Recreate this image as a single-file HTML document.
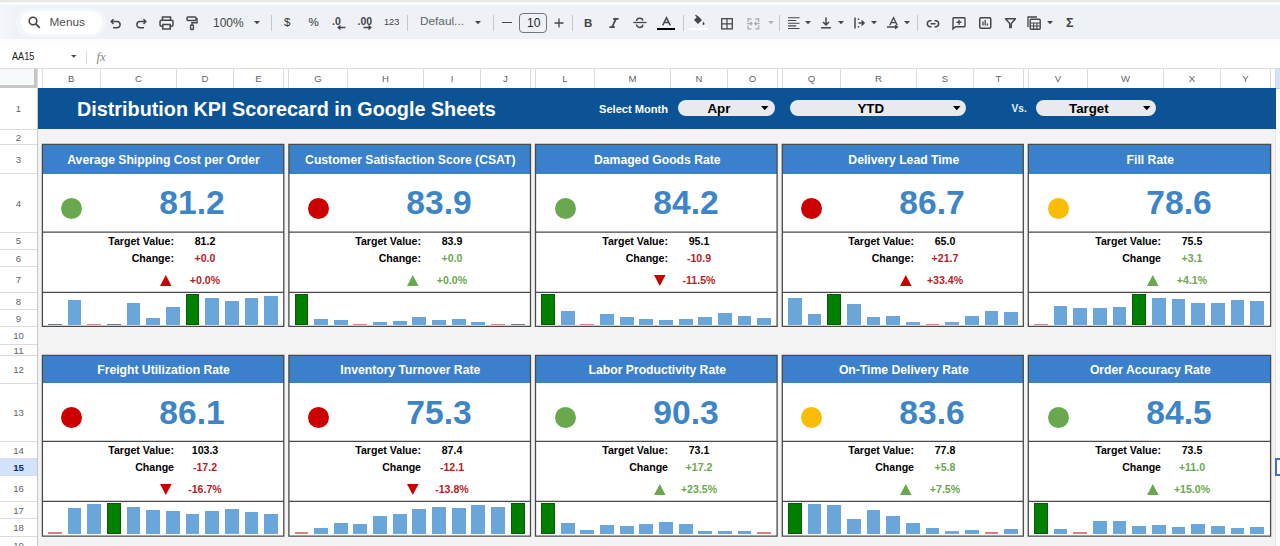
<!DOCTYPE html><html><head><meta charset="utf-8"><title>Distribution KPI Scorecard</title><style>
*{margin:0;padding:0;box-sizing:border-box}
html,body{width:1280px;height:546px;overflow:hidden;background:#fff;font-family:"Liberation Sans",sans-serif;position:relative}
.a{position:absolute}
.t{position:absolute;white-space:nowrap;line-height:1}
.ic{position:absolute;overflow:visible}
.ch{color:#5f6368;font-size:9.6px;text-align:center}
.rh{color:#5f6368;font-size:9.6px;text-align:center}
.ct{color:#fff;font-weight:bold;font-size:12.2px;text-align:center}
.big{color:#3d85c6;font-weight:bold;font-size:33.6px;text-align:center}
.lb{color:#000;font-weight:bold;font-size:10.6px;text-align:right}
.vl{font-weight:bold;font-size:10.6px;text-align:center}
.bar{position:absolute;background:#6ba6da}
</style></head><body>
<div class="a" style="left:0;top:0;width:1280px;height:1.5px;background:#e9e6e8"></div>
<div class="a" style="left:0;top:1.5px;width:1280px;height:43.5px;background:#fbfcfe"></div>
<div class="a" style="left:0;top:4.5px;width:1280px;height:34px;background:linear-gradient(90deg,#f4f6fa 0px,#eef2f7 14px)"></div>
<div class="a" style="left:16px;top:8px;width:90px;height:29px;background:#f3f6fa;border-radius:15px"></div>
<div class="a" style="left:21px;top:11px;width:80.5px;height:23px;background:#fff;border-radius:12px"></div>
<svg class="ic" style="left:28px;top:16px" width="13" height="13" viewBox="0 0 13 13"><circle cx="5" cy="5" r="3.8" fill="none" stroke="#444" stroke-width="1.6"/><path d="M7.8 7.8 L11.8 11.8" stroke="#444" stroke-width="1.7"/></svg>
<div class="t" style="left:49.5px;top:17.2px;font-size:11.8px;color:#505050">Menus</div>
<svg class="ic" style="left:110px;top:18px" width="12" height="11" viewBox="0 0 12 11"><path d="M3.5 1.2 L1.2 3.6 L3.5 6" fill="none" stroke="#444746" stroke-width="1.5"/><path d="M1.5 3.6 H7 A3.1 3.1 0 0 1 7 9.8 H3" fill="none" stroke="#444746" stroke-width="1.5"/></svg>
<svg class="ic" style="left:135px;top:18px" width="12" height="11" viewBox="0 0 12 11"><path d="M8.5 1.2 L10.8 3.6 L8.5 6" fill="none" stroke="#444746" stroke-width="1.5"/><path d="M10.5 3.6 H5 A3.1 3.1 0 0 0 5 9.8 H9" fill="none" stroke="#444746" stroke-width="1.5"/></svg>
<svg class="ic" style="left:159px;top:16px" width="15" height="14" viewBox="0 0 15 14"><path d="M3.5 4 V1 H11.5 V4" fill="none" stroke="#444746" stroke-width="1.5"/><rect x="1" y="4.3" width="13" height="6" rx="1.5" fill="none" stroke="#444746" stroke-width="1.5"/><rect x="3.8" y="8.5" width="7.4" height="4.5" fill="#eef2f7" stroke="#444746" stroke-width="1.5"/></svg>
<svg class="ic" style="left:186px;top:16px" width="12" height="14" viewBox="0 0 12 14"><rect x="1" y="1" width="9" height="3.6" rx="1" fill="none" stroke="#444746" stroke-width="1.5"/><path d="M10 2.8 H11 V6.8 H6 V9" fill="none" stroke="#444746" stroke-width="1.4"/><rect x="4.6" y="9" width="2.8" height="4.5" rx="0.8" fill="none" stroke="#444746" stroke-width="1.4"/></svg>
<div class="t" style="left:213px;top:17px;font-size:12px;color:#444">100%</div>
<svg class="ic" style="left:254px;top:21.4px" width="6" height="3.2" viewBox="0 0 6 3.2"><path d="M0 0 H6 L3.0 3.2 Z" fill="#444746"/></svg>
<div class="a" style="left:271px;top:14.5px;width:1px;height:16.5px;background:#c7c7c7"></div>
<div class="t" style="left:284px;top:16.5px;font-size:11.5px;color:#333">$</div>
<div class="t" style="left:308.5px;top:17px;font-size:11.5px;color:#333">%</div>
<div class="t" style="left:332px;top:16px;font-size:10.5px;color:#444;font-weight:bold">.0</div>
<svg class="ic" style="left:337px;top:24.5px" width="9" height="5" viewBox="0 0 9 5"><path d="M8.5 2.5 H1.5 M3.5 0.5 L1.2 2.5 L3.5 4.5" fill="none" stroke="#444746" stroke-width="1.4"/></svg>
<div class="t" style="left:357.5px;top:16px;font-size:10.5px;color:#444;font-weight:bold">.00</div>
<svg class="ic" style="left:363px;top:24.5px" width="9" height="5" viewBox="0 0 9 5"><path d="M0.5 2.5 H7.5 M5.5 0.5 L7.8 2.5 L5.5 4.5" fill="none" stroke="#444746" stroke-width="1.4"/></svg>
<div class="t" style="left:384px;top:17.8px;font-size:9.2px;color:#444">123</div>
<div class="a" style="left:407px;top:14.5px;width:1px;height:16.5px;background:#c7c7c7"></div>
<div class="t" style="left:420px;top:15.8px;font-size:11.8px;color:#5f6368">Defaul...</div>
<svg class="ic" style="left:475px;top:21.4px" width="6" height="3.2" viewBox="0 0 6 3.2"><path d="M0 0 H6 L3.0 3.2 Z" fill="#444746"/></svg>
<div class="a" style="left:493px;top:14.5px;width:1px;height:16.5px;background:#c7c7c7"></div>
<div class="a" style="left:502px;top:21.6px;width:9.5px;height:1.5px;background:#444746"></div>
<div class="a" style="left:519px;top:13px;width:28px;height:20px;border:1px solid #747775;border-radius:4px"></div>
<div class="t" style="left:527px;top:17px;font-size:12px;color:#1f1f1f">10</div>
<svg class="ic" style="left:554px;top:17.5px" width="10" height="10" viewBox="0 0 10 10"><path d="M0.5 5 H9.5 M5 0.5 V9.5" stroke="#444746" stroke-width="1.3"/></svg>
<div class="a" style="left:572px;top:14.5px;width:1px;height:16.5px;background:#c7c7c7"></div>
<div class="t" style="left:584px;top:17.7px;font-size:11.5px;color:#444;font-weight:bold">B</div>
<svg class="ic" style="left:608.5px;top:17.5px" width="10" height="10" viewBox="0 0 10 10"><path d="M4.2 0.9 H9.6 M0.4 9.1 H5.8 M6.9 0.9 L3.1 9.1" fill="none" stroke="#444746" stroke-width="1.7"/></svg>
<svg class="ic" style="left:632.5px;top:17px" width="14" height="11" viewBox="0 0 14 11"><path d="M3.6 4 A3.1 2.6 0 0 1 9.8 3.6 M3.6 7.4 A3.1 2.9 0 0 0 9.8 7.6" fill="none" stroke="#444746" stroke-width="1.5"/><path d="M0.3 5.5 H13.5" stroke="#444746" stroke-width="1.3"/></svg>
<svg class="ic" style="left:662px;top:17px" width="9" height="8.5" viewBox="0 0 9 8.5"><path d="M0.7 8.3 L4.5 0.6 L8.3 8.3 M2 5.6 H7" fill="none" stroke="#444746" stroke-width="1.5"/></svg>
<div class="a" style="left:657px;top:27.5px;width:18px;height:2.8px;background:#000"></div>
<div class="a" style="left:683px;top:14.5px;width:1px;height:16.5px;background:#c7c7c7"></div>
<svg class="ic" style="left:692px;top:14px" width="14" height="12" viewBox="0 0 14 12"><path d="M2 6 L6 2 L10 6 L6 10 Z" fill="#444746"/><path d="M3.5 1 L6 3.5" stroke="#444746" stroke-width="1.4"/><path d="M11.5 7.5 Q12.5 9 12.5 10 A1 1 0 0 1 10.5 10 Q10.5 9 11.5 7.5Z" fill="#444746"/></svg>
<div class="a" style="left:689px;top:27.5px;width:19px;height:2.8px;background:#fff"></div>
<svg class="ic" style="left:720.5px;top:17.5px" width="12" height="11.5" viewBox="0 0 12 11.5"><rect x="0.7" y="0.7" width="10.6" height="10.2" fill="none" stroke="#444746" stroke-width="1.3"/><path d="M6 0.7 V10.9 M0.7 5.8 H11.3" stroke="#444746" stroke-width="1.2"/></svg>
<svg class="ic" style="left:747px;top:17.5px" width="13" height="11.5" viewBox="0 0 13 11.5"><path d="M4.5 1 H1 V4 M1 7.5 V10.8 H4.5 M8.2 1 H11.7 V4 M11.7 7.5 V10.8 H8.2 M0 5.6 H5 M3.4 4 L5 5.6 L3.4 7.2 M12.7 5.6 H7.7 M9.3 4 L7.7 5.6 L9.3 7.2" fill="none" stroke="#a9acb0" stroke-width="1.3"/></svg>
<svg class="ic" style="left:768px;top:21.4px" width="6" height="3.2" viewBox="0 0 6 3.2"><path d="M0 0 H6 L3.0 3.2 Z" fill="#b0b3b8"/></svg>
<div class="a" style="left:779px;top:14.5px;width:1px;height:16.5px;background:#c7c7c7"></div>
<svg class="ic" style="left:787.5px;top:17px" width="12" height="12" viewBox="0 0 12 12"><path d="M0 0.8 H11.5 M0 3.5 H8.2 M0 6.2 H11.5 M0 8.9 H8.2 M0 11.5 H11.5" stroke="#444746" stroke-width="1.1"/></svg>
<svg class="ic" style="left:805px;top:21.4px" width="6" height="3.2" viewBox="0 0 6 3.2"><path d="M0 0 H6 L3.0 3.2 Z" fill="#444746"/></svg>
<svg class="ic" style="left:821px;top:17px" width="10" height="12" viewBox="0 0 10 12"><path d="M5 0.5 V7.5 M2 5 L5 8 L8 5" fill="none" stroke="#444746" stroke-width="1.5"/><path d="M0 10.8 H10" stroke="#444746" stroke-width="1.5"/></svg>
<svg class="ic" style="left:838px;top:21.4px" width="6" height="3.2" viewBox="0 0 6 3.2"><path d="M0 0 H6 L3.0 3.2 Z" fill="#444746"/></svg>
<svg class="ic" style="left:853.5px;top:17px" width="11" height="12" viewBox="0 0 11 12"><path d="M1 0.5 V11.5" stroke="#444746" stroke-width="1.5"/><path d="M4.5 6 H10 M7.5 3.5 L10 6 L7.5 8.5" fill="none" stroke="#444746" stroke-width="1.5"/><path d="M4.5 1.5 V3 M4.5 9 V10.5" stroke="#444746" stroke-width="1.5"/></svg>
<svg class="ic" style="left:871px;top:21.4px" width="6" height="3.2" viewBox="0 0 6 3.2"><path d="M0 0 H6 L3.0 3.2 Z" fill="#444746"/></svg>
<svg class="ic" style="left:888.5px;top:17px" width="9" height="8.5" viewBox="0 0 9 8.5"><path d="M0.7 8.3 L4.5 0.6 L8.3 8.3 M2 5.6 H7" fill="none" stroke="#444746" stroke-width="1.3"/></svg>
<svg class="ic" style="left:887px;top:25px" width="12" height="4" viewBox="0 0 12 4"><path d="M0 2 H10 M8 0.2 L10.5 2 L8 3.8" fill="none" stroke="#444746" stroke-width="1.3"/></svg>
<svg class="ic" style="left:904px;top:21.4px" width="6" height="3.2" viewBox="0 0 6 3.2"><path d="M0 0 H6 L3.0 3.2 Z" fill="#444746"/></svg>
<div class="a" style="left:917px;top:14.5px;width:1px;height:16.5px;background:#c7c7c7"></div>
<svg class="ic" style="left:926px;top:19.5px" width="14" height="7.5" viewBox="0 0 14 7.5"><path d="M5.5 0.8 H3.8 A3 3 0 0 0 3.8 6.7 H5.5 M8.5 0.8 H10.2 A3 3 0 0 1 10.2 6.7 H8.5 M4.5 3.75 H9.5" fill="none" stroke="#444746" stroke-width="1.5"/></svg>
<svg class="ic" style="left:951.5px;top:16.5px" width="14" height="13" viewBox="0 0 14 13"><path d="M1 12 V1.5 A0.8 0.8 0 0 1 1.8 0.8 H12.2 A0.8 0.8 0 0 1 13 1.5 V9 A0.8 0.8 0 0 1 12.2 9.8 H3.5 Z" fill="none" stroke="#444746" stroke-width="1.4"/><path d="M7 2.8 V7.8 M4.5 5.3 H9.5" stroke="#444746" stroke-width="1.4"/></svg>
<svg class="ic" style="left:978.5px;top:17px" width="12.5" height="12" viewBox="0 0 12.5 12"><rect x="0.75" y="0.75" width="11" height="10.5" rx="1.2" fill="none" stroke="#444746" stroke-width="1.5"/><path d="M4 4.5 V8.5 M6.2 3 V8.5 M8.4 6.5 V8.5" stroke="#444746" stroke-width="1.3"/></svg>
<svg class="ic" style="left:1005px;top:18px" width="11" height="10" viewBox="0 0 11 10"><path d="M0.5 0.8 H10.5 L6.3 5.5 V9.5 H4.7 V5.5 Z" fill="none" stroke="#444746" stroke-width="1.4" stroke-linejoin="round"/></svg>
<svg class="ic" style="left:1027px;top:16px" width="14" height="14" viewBox="0 0 14 14"><path d="M1 11 V1 H10" fill="none" stroke="#444746" stroke-width="1.3"/><rect x="3.2" y="3.2" width="10" height="10" rx="1" fill="none" stroke="#444746" stroke-width="1.4"/><path d="M3.2 7 H13.2 M3.2 10 H13.2 M6.6 7 V13.2 M9.9 7 V13.2" stroke="#444746" stroke-width="1.1"/></svg>
<svg class="ic" style="left:1047px;top:21.4px" width="6" height="3.2" viewBox="0 0 6 3.2"><path d="M0 0 H6 L3.0 3.2 Z" fill="#444746"/></svg>
<div class="t" style="left:1066px;top:16.5px;font-size:12.5px;color:#444;font-weight:bold">&Sigma;</div>
<div class="t" style="left:12px;top:51.6px;font-size:10.4px;color:#1a1a1a;transform:scaleX(0.88);transform-origin:0 0">AA15</div>
<svg class="ic" style="left:70.5px;top:55.4px" width="5.5" height="2.8" viewBox="0 0 5.5 2.8"><path d="M0 0 H5.5 L2.75 2.8 Z" fill="#444746"/></svg>
<div class="a" style="left:86px;top:51px;width:1px;height:13px;background:#dadce0"></div>
<div class="t" style="left:96.5px;top:50px;font-size:13px;color:#8a8a8a;font-style:italic;font-family:'Liberation Serif',serif">fx</div>
<div class="a" style="left:0;top:68px;width:1280px;height:1px;background:#dadce0"></div>
<div class="a" style="left:0;top:69px;width:1280px;height:19px;background:#fff"></div>
<div class="a" style="left:0;top:69px;width:37px;height:19px;background:#f8f9fa"></div>
<div class="a" style="left:34.3px;top:69px;width:2.8px;height:19px;background:#c4c7c5"></div>
<div class="a" style="left:0;top:85.3px;width:37.3px;height:2.7px;background:#c4c7c5"></div>
<div class="a" style="left:1275.5px;top:69px;width:10px;height:19px;background:#d3e3fd"></div>
<div class="a" style="left:41.5px;top:69px;width:1px;height:19px;background:#dadce0"></div>
<div class="t ch" style="left:42px;top:74.3px;width:58.5px">B</div>
<div class="a" style="left:100.0px;top:69px;width:1px;height:19px;background:#dadce0"></div>
<div class="t ch" style="left:100.5px;top:74.3px;width:76.0px">C</div>
<div class="a" style="left:176.0px;top:69px;width:1px;height:19px;background:#dadce0"></div>
<div class="t ch" style="left:176.5px;top:74.3px;width:57.0px">D</div>
<div class="a" style="left:233.0px;top:69px;width:1px;height:19px;background:#dadce0"></div>
<div class="t ch" style="left:233.5px;top:74.3px;width:50.0px">E</div>
<div class="a" style="left:283.0px;top:69px;width:1px;height:19px;background:#dadce0"></div>
<div class="a" style="left:288.0px;top:69px;width:1px;height:19px;background:#dadce0"></div>
<div class="t ch" style="left:288.5px;top:74.3px;width:59.0px">G</div>
<div class="a" style="left:347.0px;top:69px;width:1px;height:19px;background:#dadce0"></div>
<div class="t ch" style="left:347.5px;top:74.3px;width:76.0px">H</div>
<div class="a" style="left:423.0px;top:69px;width:1px;height:19px;background:#dadce0"></div>
<div class="t ch" style="left:423.5px;top:74.3px;width:57.0px">I</div>
<div class="a" style="left:480.0px;top:69px;width:1px;height:19px;background:#dadce0"></div>
<div class="t ch" style="left:480.5px;top:74.3px;width:50.0px">J</div>
<div class="a" style="left:530.0px;top:69px;width:1px;height:19px;background:#dadce0"></div>
<div class="a" style="left:535.0px;top:69px;width:1px;height:19px;background:#dadce0"></div>
<div class="t ch" style="left:535.5px;top:74.3px;width:59.0px">L</div>
<div class="a" style="left:594.0px;top:69px;width:1px;height:19px;background:#dadce0"></div>
<div class="t ch" style="left:594.5px;top:74.3px;width:76.0px">M</div>
<div class="a" style="left:670.0px;top:69px;width:1px;height:19px;background:#dadce0"></div>
<div class="t ch" style="left:670.5px;top:74.3px;width:57.0px">N</div>
<div class="a" style="left:727.0px;top:69px;width:1px;height:19px;background:#dadce0"></div>
<div class="t ch" style="left:727.5px;top:74.3px;width:50.0px">O</div>
<div class="a" style="left:777.0px;top:69px;width:1px;height:19px;background:#dadce0"></div>
<div class="a" style="left:782.0px;top:69px;width:1px;height:19px;background:#dadce0"></div>
<div class="t ch" style="left:782.5px;top:74.3px;width:58.0px">Q</div>
<div class="a" style="left:840.0px;top:69px;width:1px;height:19px;background:#dadce0"></div>
<div class="t ch" style="left:840.5px;top:74.3px;width:76.0px">R</div>
<div class="a" style="left:916.0px;top:69px;width:1px;height:19px;background:#dadce0"></div>
<div class="t ch" style="left:916.5px;top:74.3px;width:57.0px">S</div>
<div class="a" style="left:973.0px;top:69px;width:1px;height:19px;background:#dadce0"></div>
<div class="t ch" style="left:973.5px;top:74.3px;width:50.0px">T</div>
<div class="a" style="left:1023.0px;top:69px;width:1px;height:19px;background:#dadce0"></div>
<div class="a" style="left:1028.0px;top:69px;width:1px;height:19px;background:#dadce0"></div>
<div class="t ch" style="left:1028.5px;top:74.3px;width:59.0px">V</div>
<div class="a" style="left:1087.0px;top:69px;width:1px;height:19px;background:#dadce0"></div>
<div class="t ch" style="left:1087.5px;top:74.3px;width:76.0px">W</div>
<div class="a" style="left:1163.0px;top:69px;width:1px;height:19px;background:#dadce0"></div>
<div class="t ch" style="left:1163.5px;top:74.3px;width:57.0px">X</div>
<div class="a" style="left:1220.0px;top:69px;width:1px;height:19px;background:#dadce0"></div>
<div class="t ch" style="left:1220.5px;top:74.3px;width:50.0px">Y</div>
<div class="a" style="left:1270.0px;top:69px;width:1px;height:19px;background:#dadce0"></div>
<div class="a" style="left:1275.0px;top:69px;width:1px;height:19px;background:#dadce0"></div>
<div class="t ch" style="left:1275.5px;top:74.3px;width:124.5px">AA</div>
<div class="a" style="left:37px;top:69px;width:1px;height:19px;background:#dadce0"></div>
<div class="a" style="left:0;top:87.5px;width:1280px;height:1px;background:#c4c7c5"></div>
<div class="a" style="left:0;top:88px;width:37px;height:458px;background:#fff"></div>
<div class="a" style="left:0;top:458.2px;width:37px;height:17.5px;background:#d3e3fd"></div>
<div class="t rh" style="left:0;top:104.45px;width:37px;">1</div>
<div class="a" style="left:0;top:129.0px;width:37px;height:1px;background:#dadce0"></div>
<div class="t rh" style="left:0;top:132.54999999999998px;width:37px;">2</div>
<div class="a" style="left:0;top:143.7px;width:37px;height:1px;background:#dadce0"></div>
<div class="t rh" style="left:0;top:154.75px;width:37px;">3</div>
<div class="a" style="left:0;top:173.4px;width:37px;height:1px;background:#dadce0"></div>
<div class="t rh" style="left:0;top:198.7px;width:37px;">4</div>
<div class="a" style="left:0;top:231.6px;width:37px;height:1px;background:#dadce0"></div>
<div class="t rh" style="left:0;top:236.45px;width:37px;">5</div>
<div class="a" style="left:0;top:248.9px;width:37px;height:1px;background:#dadce0"></div>
<div class="t rh" style="left:0;top:253.59999999999997px;width:37px;">6</div>
<div class="a" style="left:0;top:265.9px;width:37px;height:1px;background:#dadce0"></div>
<div class="t rh" style="left:0;top:275.05px;width:37px;">7</div>
<div class="a" style="left:0;top:291.8px;width:37px;height:1px;background:#dadce0"></div>
<div class="t rh" style="left:0;top:296.5px;width:37px;">8</div>
<div class="a" style="left:0;top:308.8px;width:37px;height:1px;background:#dadce0"></div>
<div class="t rh" style="left:0;top:313.59999999999997px;width:37px;">9</div>
<div class="a" style="left:0;top:326.0px;width:37px;height:1px;background:#dadce0"></div>
<div class="t rh" style="left:0;top:331.15px;width:37px;">10</div>
<div class="a" style="left:0;top:343.9px;width:37px;height:1px;background:#dadce0"></div>
<div class="t rh" style="left:0;top:345.49999999999994px;width:37px;">11</div>
<div class="a" style="left:0;top:354.7px;width:37px;height:1px;background:#dadce0"></div>
<div class="t rh" style="left:0;top:364.95px;width:37px;">12</div>
<div class="a" style="left:0;top:382.8px;width:37px;height:1px;background:#dadce0"></div>
<div class="t rh" style="left:0;top:408.05px;width:37px;">13</div>
<div class="a" style="left:0;top:440.9px;width:37px;height:1px;background:#dadce0"></div>
<div class="t rh" style="left:0;top:445.49999999999994px;width:37px;">14</div>
<div class="a" style="left:0;top:457.7px;width:37px;height:1px;background:#dadce0"></div>
<div class="t rh" style="left:0;top:462.65px;width:37px;color:#0a2c66;font-weight:bold;">15</div>
<div class="a" style="left:0;top:475.2px;width:37px;height:1px;background:#dadce0"></div>
<div class="t rh" style="left:0;top:484.2px;width:37px;">16</div>
<div class="a" style="left:0;top:500.8px;width:37px;height:1px;background:#dadce0"></div>
<div class="t rh" style="left:0;top:505.59999999999997px;width:37px;">17</div>
<div class="a" style="left:0;top:518.0px;width:37px;height:1px;background:#dadce0"></div>
<div class="t rh" style="left:0;top:523.0500000000001px;width:37px;">18</div>
<div class="a" style="left:0;top:535.7px;width:37px;height:1px;background:#dadce0"></div>
<div class="t rh" style="left:0;top:540.8000000000001px;width:37px;">19</div>
<div class="a" style="left:37px;top:88px;width:1px;height:458px;background:#c4c7c5"></div>
<div class="a" style="left:38px;top:88.5px;width:1237.5px;height:458px;background:#f3f3f3"></div>
<div class="a" style="left:1275.5px;top:88.5px;width:10px;height:458px;background:#fbfbfb"></div>
<div class="a" style="left:1275px;top:88.5px;width:1px;height:458px;background:#e6e6e6"></div>
<div class="a" style="left:37.5px;top:88px;width:1238px;height:40.6px;background:#0b5394"></div>
<div class="t" style="left:77px;top:100.3px;font-size:19.8px;color:#fff;font-weight:bold">Distribution KPI Scorecard in Google Sheets</div>
<div class="t" style="left:599px;top:103.5px;font-size:11.1px;color:#fff;font-weight:bold">Select Month</div>
<div class="a" style="left:677.5px;top:100.3px;width:97.0px;height:16px;background:#e8eaed;border-radius:8px"></div>
<div class="t" style="left:707.5px;top:102px;font-size:13.3px;color:#000;font-weight:bold">Apr</div>
<svg class="ic" style="left:761.3px;top:106.3px" width="7.5" height="4.2" viewBox="0 0 7.5 4.2"><path d="M0 0 H7.5 L3.75 4.2 Z" fill="#000"/></svg>
<div class="a" style="left:789.7px;top:100.3px;width:176.5999999999999px;height:16px;background:#e8eaed;border-radius:8px"></div>
<div class="t" style="left:857.5px;top:102px;font-size:13.3px;color:#000;font-weight:bold">YTD</div>
<svg class="ic" style="left:953px;top:106.3px" width="7.5" height="4.2" viewBox="0 0 7.5 4.2"><path d="M0 0 H7.5 L3.75 4.2 Z" fill="#000"/></svg>
<div class="t" style="left:1011.5px;top:104px;font-size:10.2px;color:#e3eefa;font-weight:bold">Vs.</div>
<div class="a" style="left:1036px;top:100.3px;width:120px;height:16px;background:#e8eaed;border-radius:8px"></div>
<div class="t" style="left:1069px;top:102px;font-size:13.3px;color:#000;font-weight:bold">Target</div>
<svg class="ic" style="left:1142.8px;top:106.3px" width="7.5" height="4.2" viewBox="0 0 7.5 4.2"><path d="M0 0 H7.5 L3.75 4.2 Z" fill="#000"/></svg>
<div class="a" style="left:42.4px;top:144.3px;width:241.4px;height:182.0px;background:#fff"></div>
<div class="a" style="left:42.4px;top:144.3px;width:241.4px;height:29.3px;background:#3a80ca"></div>
<div class="t ct" style="left:42.8px;top:154.3px;width:241.5px">Average Shipping Cost per Order</div>
<div class="a" style="left:60.75px;top:197.7px;width:21px;height:21px;border-radius:50%;background:#6aa84f"></div>
<div class="t big" style="left:100.5px;top:186.09999999999997px;width:183.0px">81.2</div>
<div class="t lb" style="left:100.5px;top:235.9px;width:73.5px">Target Value:</div>
<div class="t vl" style="left:176.5px;top:235.9px;width:57.0px;color:#000">81.2</div>
<div class="t lb" style="left:100.5px;top:253.3px;width:73.5px">Change:</div>
<div class="t vl" style="left:176.5px;top:253.3px;width:57.0px;color:#b81c24">+0.0</div>
<div class="t vl" style="left:176.5px;top:274.9px;width:57.0px;color:#b81c24">+0.0%</div>
<svg class="ic" style="left:160.1px;top:274.9px" width="11.6" height="10.9" viewBox="0 0 11.6 10.9"><path d="M5.8 0 L11.6 10.9 H0 Z" fill="#cc0000"/></svg>
<div class="bar" style="left:48.00px;top:323.5px;width:13.8px;height:1.3px;background:#6a7d8f"></div>
<div class="bar" style="left:67.66px;top:300px;width:13.8px;height:24.80px"></div>
<div class="bar" style="left:87.32px;top:323.5px;width:13.8px;height:1.3px;background:#d98080"></div>
<div class="bar" style="left:106.98px;top:323.5px;width:13.8px;height:1.3px;background:#6a7d8f"></div>
<div class="bar" style="left:126.64px;top:303.4px;width:13.8px;height:21.40px"></div>
<div class="bar" style="left:146.30px;top:318px;width:13.8px;height:6.80px"></div>
<div class="bar" style="left:165.96px;top:307.1px;width:13.8px;height:17.70px"></div>
<div class="bar" style="left:185.62px;top:294.3px;width:13.8px;height:30.5px;background:#008000;border:0.5px solid #0a5a0a"></div>
<div class="bar" style="left:205.28px;top:298px;width:13.8px;height:26.80px"></div>
<div class="bar" style="left:224.94px;top:300.7px;width:13.8px;height:24.10px"></div>
<div class="bar" style="left:244.60px;top:298.2px;width:13.8px;height:26.60px"></div>
<div class="bar" style="left:264.26px;top:295.6px;width:13.8px;height:29.20px"></div>
<div class="a" style="left:288.9px;top:144.3px;width:241.6px;height:182.0px;background:#fff"></div>
<div class="a" style="left:288.9px;top:144.3px;width:241.6px;height:29.3px;background:#3a80ca"></div>
<div class="t ct" style="left:289.3px;top:154.3px;width:242.0px">Customer Satisfaction Score (CSAT)</div>
<div class="a" style="left:307.5px;top:197.7px;width:21px;height:21px;border-radius:50%;background:#cc0000"></div>
<div class="t big" style="left:347.5px;top:186.09999999999997px;width:183.0px">83.9</div>
<div class="t lb" style="left:347.5px;top:235.9px;width:73.5px">Target Value:</div>
<div class="t vl" style="left:423.5px;top:235.9px;width:57.0px;color:#000">83.9</div>
<div class="t lb" style="left:347.5px;top:253.3px;width:73.5px">Change:</div>
<div class="t vl" style="left:423.5px;top:253.3px;width:57.0px;color:#6aa84f">+0.0</div>
<div class="t vl" style="left:423.5px;top:274.9px;width:57.0px;color:#6aa84f">+0.0%</div>
<svg class="ic" style="left:407.1px;top:274.9px" width="11.6" height="10.9" viewBox="0 0 11.6 10.9"><path d="M5.8 0 L11.6 10.9 H0 Z" fill="#6aa84f"/></svg>
<div class="bar" style="left:294.50px;top:294.3px;width:13.8px;height:30.5px;background:#008000;border:0.5px solid #0a5a0a"></div>
<div class="bar" style="left:314.16px;top:318.7px;width:13.8px;height:6.10px"></div>
<div class="bar" style="left:333.82px;top:319.8px;width:13.8px;height:5.00px"></div>
<div class="bar" style="left:353.48px;top:323.5px;width:13.8px;height:1.3px;background:#d98080"></div>
<div class="bar" style="left:373.14px;top:322.2px;width:13.8px;height:2.60px"></div>
<div class="bar" style="left:392.80px;top:320.8px;width:13.8px;height:4.00px"></div>
<div class="bar" style="left:412.46px;top:316.9px;width:13.8px;height:7.90px"></div>
<div class="bar" style="left:432.12px;top:319.8px;width:13.8px;height:5.00px"></div>
<div class="bar" style="left:451.78px;top:319.25px;width:13.8px;height:5.55px"></div>
<div class="bar" style="left:471.44px;top:321.6px;width:13.8px;height:3.20px"></div>
<div class="bar" style="left:491.10px;top:323.5px;width:13.8px;height:1.3px;background:#d98080"></div>
<div class="bar" style="left:510.76px;top:323.5px;width:13.8px;height:1.3px;background:#6a7d8f"></div>
<div class="a" style="left:535.5px;top:144.3px;width:241.6px;height:182.0px;background:#fff"></div>
<div class="a" style="left:535.5px;top:144.3px;width:241.6px;height:29.3px;background:#3a80ca"></div>
<div class="t ct" style="left:536.3px;top:154.3px;width:242.0px">Damaged Goods Rate</div>
<div class="a" style="left:554.5px;top:197.7px;width:21px;height:21px;border-radius:50%;background:#6aa84f"></div>
<div class="t big" style="left:594.5px;top:186.09999999999997px;width:183.0px">84.2</div>
<div class="t lb" style="left:594.5px;top:235.9px;width:73.5px">Target Value:</div>
<div class="t vl" style="left:670.5px;top:235.9px;width:57.0px;color:#000">95.1</div>
<div class="t lb" style="left:594.5px;top:253.3px;width:73.5px">Change:</div>
<div class="t vl" style="left:670.5px;top:253.3px;width:57.0px;color:#b81c24">-10.9</div>
<div class="t vl" style="left:670.5px;top:274.9px;width:57.0px;color:#b81c24">-11.5%</div>
<svg class="ic" style="left:654.1px;top:274.9px" width="11.6" height="10.9" viewBox="0 0 11.6 10.9"><path d="M0 0 H11.6 L5.8 10.9 Z" fill="#cc0000"/></svg>
<div class="bar" style="left:541.10px;top:294.3px;width:13.8px;height:30.5px;background:#008000;border:0.5px solid #0a5a0a"></div>
<div class="bar" style="left:560.76px;top:311px;width:13.8px;height:13.80px"></div>
<div class="bar" style="left:580.42px;top:323.5px;width:13.8px;height:1.3px;background:#d98080"></div>
<div class="bar" style="left:600.08px;top:314px;width:13.8px;height:10.80px"></div>
<div class="bar" style="left:619.74px;top:316.9px;width:13.8px;height:7.90px"></div>
<div class="bar" style="left:639.40px;top:318.7px;width:13.8px;height:6.10px"></div>
<div class="bar" style="left:659.06px;top:319.8px;width:13.8px;height:5.00px"></div>
<div class="bar" style="left:678.72px;top:318.7px;width:13.8px;height:6.10px"></div>
<div class="bar" style="left:698.38px;top:316.9px;width:13.8px;height:7.90px"></div>
<div class="bar" style="left:718.04px;top:313.4px;width:13.8px;height:11.40px"></div>
<div class="bar" style="left:737.70px;top:315.7px;width:13.8px;height:9.10px"></div>
<div class="bar" style="left:757.36px;top:317.9px;width:13.8px;height:6.90px"></div>
<div class="a" style="left:782.3px;top:144.3px;width:241.0px;height:182.0px;background:#fff"></div>
<div class="a" style="left:782.3px;top:144.3px;width:241.0px;height:29.3px;background:#3a80ca"></div>
<div class="t ct" style="left:783.3px;top:154.3px;width:241.0px">Delivery Lead Time</div>
<div class="a" style="left:801.0px;top:197.7px;width:21px;height:21px;border-radius:50%;background:#cc0000"></div>
<div class="t big" style="left:840.5px;top:186.09999999999997px;width:183.0px">86.7</div>
<div class="t lb" style="left:840.5px;top:235.9px;width:73.5px">Target Value:</div>
<div class="t vl" style="left:916.5px;top:235.9px;width:57.0px;color:#000">65.0</div>
<div class="t lb" style="left:840.5px;top:253.3px;width:73.5px">Change:</div>
<div class="t vl" style="left:916.5px;top:253.3px;width:57.0px;color:#b81c24">+21.7</div>
<div class="t vl" style="left:916.5px;top:274.9px;width:57.0px;color:#b81c24">+33.4%</div>
<svg class="ic" style="left:900.1px;top:274.9px" width="11.6" height="10.9" viewBox="0 0 11.6 10.9"><path d="M5.8 0 L11.6 10.9 H0 Z" fill="#cc0000"/></svg>
<div class="bar" style="left:787.90px;top:297.8px;width:13.8px;height:27.00px"></div>
<div class="bar" style="left:807.56px;top:313.8px;width:13.8px;height:11.00px"></div>
<div class="bar" style="left:827.22px;top:294.3px;width:13.8px;height:30.5px;background:#008000;border:0.5px solid #0a5a0a"></div>
<div class="bar" style="left:846.88px;top:303.6px;width:13.8px;height:21.20px"></div>
<div class="bar" style="left:866.54px;top:316.7px;width:13.8px;height:8.10px"></div>
<div class="bar" style="left:886.20px;top:315.9px;width:13.8px;height:8.90px"></div>
<div class="bar" style="left:905.86px;top:322.3px;width:13.8px;height:2.5px;background:#7aa7d6"></div>
<div class="bar" style="left:925.52px;top:323.5px;width:13.8px;height:1.3px;background:#d98080"></div>
<div class="bar" style="left:945.18px;top:322.3px;width:13.8px;height:2.5px;background:#7aa7d6"></div>
<div class="bar" style="left:964.84px;top:315.9px;width:13.8px;height:8.90px"></div>
<div class="bar" style="left:984.50px;top:311px;width:13.8px;height:13.80px"></div>
<div class="bar" style="left:1004.16px;top:312px;width:13.8px;height:12.80px"></div>
<div class="a" style="left:1028.3px;top:144.3px;width:242.3px;height:182.0px;background:#fff"></div>
<div class="a" style="left:1028.3px;top:144.3px;width:242.3px;height:29.3px;background:#3a80ca"></div>
<div class="t ct" style="left:1029.3px;top:154.3px;width:242.0px">Fill Rate</div>
<div class="a" style="left:1047.5px;top:197.7px;width:21px;height:21px;border-radius:50%;background:#fbbc04"></div>
<div class="t big" style="left:1087.5px;top:186.09999999999997px;width:183.0px">78.6</div>
<div class="t lb" style="left:1087.5px;top:235.9px;width:73.5px">Target Value:</div>
<div class="t vl" style="left:1163.5px;top:235.9px;width:57.0px;color:#000">75.5</div>
<div class="t lb" style="left:1087.5px;top:253.3px;width:73.5px">Change</div>
<div class="t vl" style="left:1163.5px;top:253.3px;width:57.0px;color:#6aa84f">+3.1</div>
<div class="t vl" style="left:1163.5px;top:274.9px;width:57.0px;color:#6aa84f">+4.1%</div>
<svg class="ic" style="left:1147.1px;top:274.9px" width="11.6" height="10.9" viewBox="0 0 11.6 10.9"><path d="M5.8 0 L11.6 10.9 H0 Z" fill="#6aa84f"/></svg>
<div class="bar" style="left:1033.90px;top:323.5px;width:13.8px;height:1.3px;background:#d98080"></div>
<div class="bar" style="left:1053.56px;top:306px;width:13.8px;height:18.80px"></div>
<div class="bar" style="left:1073.22px;top:307.9px;width:13.8px;height:16.90px"></div>
<div class="bar" style="left:1092.88px;top:307.9px;width:13.8px;height:16.90px"></div>
<div class="bar" style="left:1112.54px;top:306.9px;width:13.8px;height:17.90px"></div>
<div class="bar" style="left:1132.20px;top:294.3px;width:13.8px;height:30.5px;background:#008000;border:0.5px solid #0a5a0a"></div>
<div class="bar" style="left:1151.86px;top:297.8px;width:13.8px;height:27.00px"></div>
<div class="bar" style="left:1171.52px;top:299.1px;width:13.8px;height:25.70px"></div>
<div class="bar" style="left:1191.18px;top:303px;width:13.8px;height:21.80px"></div>
<div class="bar" style="left:1210.84px;top:303.2px;width:13.8px;height:21.60px"></div>
<div class="bar" style="left:1230.50px;top:300.1px;width:13.8px;height:24.70px"></div>
<div class="bar" style="left:1250.16px;top:300.7px;width:13.8px;height:24.10px"></div>
<div class="a" style="left:42.4px;top:355.4px;width:241.4px;height:180.7px;background:#fff"></div>
<div class="a" style="left:42.4px;top:355.4px;width:241.4px;height:27.9px;background:#3a80ca"></div>
<div class="t ct" style="left:42.8px;top:364.29999999999995px;width:241.5px">Freight Utilization Rate</div>
<div class="a" style="left:60.75px;top:406.9px;width:21px;height:21px;border-radius:50%;background:#cc0000"></div>
<div class="t big" style="left:100.5px;top:395.55px;width:183.0px">86.1</div>
<div class="t lb" style="left:100.5px;top:445.2px;width:73.5px">Target Value:</div>
<div class="t vl" style="left:176.5px;top:445.2px;width:57.0px;color:#000">103.3</div>
<div class="t lb" style="left:100.5px;top:462.1px;width:73.5px">Change</div>
<div class="t vl" style="left:176.5px;top:462.1px;width:57.0px;color:#b81c24">-17.2</div>
<div class="t vl" style="left:176.5px;top:484.2px;width:57.0px;color:#b81c24">-16.7%</div>
<svg class="ic" style="left:160.1px;top:484.2px" width="11.6" height="10.9" viewBox="0 0 11.6 10.9"><path d="M0 0 H11.6 L5.8 10.9 Z" fill="#cc0000"/></svg>
<div class="bar" style="left:48.00px;top:532.4000000000001px;width:13.8px;height:1.3px;background:#d98080"></div>
<div class="bar" style="left:67.66px;top:508.3px;width:13.8px;height:25.40px"></div>
<div class="bar" style="left:87.32px;top:504px;width:13.8px;height:29.70px"></div>
<div class="bar" style="left:106.98px;top:503.3px;width:13.8px;height:30.400000000000034px;background:#008000;border:0.5px solid #0a5a0a"></div>
<div class="bar" style="left:126.64px;top:506.8px;width:13.8px;height:26.90px"></div>
<div class="bar" style="left:146.30px;top:509.9px;width:13.8px;height:23.80px"></div>
<div class="bar" style="left:165.96px;top:510.7px;width:13.8px;height:23.00px"></div>
<div class="bar" style="left:185.62px;top:514.2px;width:13.8px;height:19.50px"></div>
<div class="bar" style="left:205.28px;top:510.7px;width:13.8px;height:23.00px"></div>
<div class="bar" style="left:224.94px;top:509.1px;width:13.8px;height:24.60px"></div>
<div class="bar" style="left:244.60px;top:512px;width:13.8px;height:21.70px"></div>
<div class="bar" style="left:264.26px;top:513.6px;width:13.8px;height:20.10px"></div>
<div class="a" style="left:288.9px;top:355.4px;width:241.6px;height:180.7px;background:#fff"></div>
<div class="a" style="left:288.9px;top:355.4px;width:241.6px;height:27.9px;background:#3a80ca"></div>
<div class="t ct" style="left:289.3px;top:364.29999999999995px;width:242.0px">Inventory Turnover Rate</div>
<div class="a" style="left:307.5px;top:406.9px;width:21px;height:21px;border-radius:50%;background:#cc0000"></div>
<div class="t big" style="left:347.5px;top:395.55px;width:183.0px">75.3</div>
<div class="t lb" style="left:347.5px;top:445.2px;width:73.5px">Target Value:</div>
<div class="t vl" style="left:423.5px;top:445.2px;width:57.0px;color:#000">87.4</div>
<div class="t lb" style="left:347.5px;top:462.1px;width:73.5px">Change</div>
<div class="t vl" style="left:423.5px;top:462.1px;width:57.0px;color:#b81c24">-12.1</div>
<div class="t vl" style="left:423.5px;top:484.2px;width:57.0px;color:#b81c24">-13.8%</div>
<svg class="ic" style="left:407.1px;top:484.2px" width="11.6" height="10.9" viewBox="0 0 11.6 10.9"><path d="M0 0 H11.6 L5.8 10.9 Z" fill="#cc0000"/></svg>
<div class="bar" style="left:294.50px;top:532.4000000000001px;width:13.8px;height:1.3px;background:#d98080"></div>
<div class="bar" style="left:314.16px;top:527.9px;width:13.8px;height:5.80px"></div>
<div class="bar" style="left:333.82px;top:523.4px;width:13.8px;height:10.30px"></div>
<div class="bar" style="left:353.48px;top:524.3px;width:13.8px;height:9.40px"></div>
<div class="bar" style="left:373.14px;top:516.1px;width:13.8px;height:17.60px"></div>
<div class="bar" style="left:392.80px;top:514.2px;width:13.8px;height:19.50px"></div>
<div class="bar" style="left:412.46px;top:509.1px;width:13.8px;height:24.60px"></div>
<div class="bar" style="left:432.12px;top:506.8px;width:13.8px;height:26.90px"></div>
<div class="bar" style="left:451.78px;top:507.7px;width:13.8px;height:26.00px"></div>
<div class="bar" style="left:471.44px;top:504.8px;width:13.8px;height:28.90px"></div>
<div class="bar" style="left:491.10px;top:506.8px;width:13.8px;height:26.90px"></div>
<div class="bar" style="left:510.76px;top:503.3px;width:13.8px;height:30.400000000000034px;background:#008000;border:0.5px solid #0a5a0a"></div>
<div class="a" style="left:535.5px;top:355.4px;width:241.6px;height:180.7px;background:#fff"></div>
<div class="a" style="left:535.5px;top:355.4px;width:241.6px;height:27.9px;background:#3a80ca"></div>
<div class="t ct" style="left:536.3px;top:364.29999999999995px;width:242.0px">Labor Productivity Rate</div>
<div class="a" style="left:554.5px;top:406.9px;width:21px;height:21px;border-radius:50%;background:#6aa84f"></div>
<div class="t big" style="left:594.5px;top:395.55px;width:183.0px">90.3</div>
<div class="t lb" style="left:594.5px;top:445.2px;width:73.5px">Target Value:</div>
<div class="t vl" style="left:670.5px;top:445.2px;width:57.0px;color:#000">73.1</div>
<div class="t lb" style="left:594.5px;top:462.1px;width:73.5px">Change</div>
<div class="t vl" style="left:670.5px;top:462.1px;width:57.0px;color:#6aa84f">+17.2</div>
<div class="t vl" style="left:670.5px;top:484.2px;width:57.0px;color:#6aa84f">+23.5%</div>
<svg class="ic" style="left:654.1px;top:484.2px" width="11.6" height="10.9" viewBox="0 0 11.6 10.9"><path d="M5.8 0 L11.6 10.9 H0 Z" fill="#6aa84f"/></svg>
<div class="bar" style="left:541.10px;top:503.3px;width:13.8px;height:30.400000000000034px;background:#008000;border:0.5px solid #0a5a0a"></div>
<div class="bar" style="left:560.76px;top:523.4px;width:13.8px;height:10.30px"></div>
<div class="bar" style="left:580.42px;top:529.8px;width:13.8px;height:3.90px"></div>
<div class="bar" style="left:600.08px;top:524.9px;width:13.8px;height:8.80px"></div>
<div class="bar" style="left:619.74px;top:526.3px;width:13.8px;height:7.40px"></div>
<div class="bar" style="left:639.40px;top:524.3px;width:13.8px;height:9.40px"></div>
<div class="bar" style="left:659.06px;top:522px;width:13.8px;height:11.70px"></div>
<div class="bar" style="left:678.72px;top:524.3px;width:13.8px;height:9.40px"></div>
<div class="bar" style="left:698.38px;top:530.8px;width:13.8px;height:2.90px"></div>
<div class="bar" style="left:718.04px;top:531.4px;width:13.8px;height:2.30px"></div>
<div class="bar" style="left:737.70px;top:531.4px;width:13.8px;height:2.30px"></div>
<div class="bar" style="left:757.36px;top:532.4000000000001px;width:13.8px;height:1.3px;background:#d98080"></div>
<div class="a" style="left:782.3px;top:355.4px;width:241.0px;height:180.7px;background:#fff"></div>
<div class="a" style="left:782.3px;top:355.4px;width:241.0px;height:27.9px;background:#3a80ca"></div>
<div class="t ct" style="left:783.3px;top:364.29999999999995px;width:241.0px">On-Time Delivery Rate</div>
<div class="a" style="left:801.0px;top:406.9px;width:21px;height:21px;border-radius:50%;background:#fbbc04"></div>
<div class="t big" style="left:840.5px;top:395.55px;width:183.0px">83.6</div>
<div class="t lb" style="left:840.5px;top:445.2px;width:73.5px">Target Value:</div>
<div class="t vl" style="left:916.5px;top:445.2px;width:57.0px;color:#000">77.8</div>
<div class="t lb" style="left:840.5px;top:462.1px;width:73.5px">Change</div>
<div class="t vl" style="left:916.5px;top:462.1px;width:57.0px;color:#6aa84f">+5.8</div>
<div class="t vl" style="left:916.5px;top:484.2px;width:57.0px;color:#6aa84f">+7.5%</div>
<svg class="ic" style="left:900.1px;top:484.2px" width="11.6" height="10.9" viewBox="0 0 11.6 10.9"><path d="M5.8 0 L11.6 10.9 H0 Z" fill="#6aa84f"/></svg>
<div class="bar" style="left:787.90px;top:503.3px;width:13.8px;height:30.400000000000034px;background:#008000;border:0.5px solid #0a5a0a"></div>
<div class="bar" style="left:807.56px;top:504px;width:13.8px;height:29.70px"></div>
<div class="bar" style="left:827.22px;top:505.4px;width:13.8px;height:28.30px"></div>
<div class="bar" style="left:846.88px;top:519.1px;width:13.8px;height:14.60px"></div>
<div class="bar" style="left:866.54px;top:509.9px;width:13.8px;height:23.80px"></div>
<div class="bar" style="left:886.20px;top:515.75px;width:13.8px;height:17.95px"></div>
<div class="bar" style="left:905.86px;top:522.8px;width:13.8px;height:10.90px"></div>
<div class="bar" style="left:925.52px;top:527.9px;width:13.8px;height:5.80px"></div>
<div class="bar" style="left:945.18px;top:531.2px;width:13.8px;height:2.5px;background:#7aa7d6"></div>
<div class="bar" style="left:964.84px;top:530.2px;width:13.8px;height:3.50px"></div>
<div class="bar" style="left:984.50px;top:532.4000000000001px;width:13.8px;height:1.3px;background:#d98080"></div>
<div class="bar" style="left:1004.16px;top:528.6px;width:13.8px;height:5.10px"></div>
<div class="a" style="left:1028.3px;top:355.4px;width:242.3px;height:180.7px;background:#fff"></div>
<div class="a" style="left:1028.3px;top:355.4px;width:242.3px;height:27.9px;background:#3a80ca"></div>
<div class="t ct" style="left:1029.3px;top:364.29999999999995px;width:242.0px">Order Accuracy Rate</div>
<div class="a" style="left:1047.5px;top:406.9px;width:21px;height:21px;border-radius:50%;background:#6aa84f"></div>
<div class="t big" style="left:1087.5px;top:395.55px;width:183.0px">84.5</div>
<div class="t lb" style="left:1087.5px;top:445.2px;width:73.5px">Target Value:</div>
<div class="t vl" style="left:1163.5px;top:445.2px;width:57.0px;color:#000">73.5</div>
<div class="t lb" style="left:1087.5px;top:462.1px;width:73.5px">Change</div>
<div class="t vl" style="left:1163.5px;top:462.1px;width:57.0px;color:#6aa84f">+11.0</div>
<div class="t vl" style="left:1163.5px;top:484.2px;width:57.0px;color:#6aa84f">+15.0%</div>
<svg class="ic" style="left:1147.1px;top:484.2px" width="11.6" height="10.9" viewBox="0 0 11.6 10.9"><path d="M5.8 0 L11.6 10.9 H0 Z" fill="#6aa84f"/></svg>
<div class="bar" style="left:1033.90px;top:503.3px;width:13.8px;height:30.400000000000034px;background:#008000;border:0.5px solid #0a5a0a"></div>
<div class="bar" style="left:1053.56px;top:528.6px;width:13.8px;height:5.10px"></div>
<div class="bar" style="left:1073.22px;top:532.4000000000001px;width:13.8px;height:1.3px;background:#d98080"></div>
<div class="bar" style="left:1092.88px;top:520.8px;width:13.8px;height:12.90px"></div>
<div class="bar" style="left:1112.54px;top:520.8px;width:13.8px;height:12.90px"></div>
<div class="bar" style="left:1132.20px;top:525.9px;width:13.8px;height:7.80px"></div>
<div class="bar" style="left:1151.86px;top:524.9px;width:13.8px;height:8.80px"></div>
<div class="bar" style="left:1171.52px;top:526.7px;width:13.8px;height:7.00px"></div>
<div class="bar" style="left:1191.18px;top:524.3px;width:13.8px;height:9.40px"></div>
<div class="bar" style="left:1210.84px;top:525.9px;width:13.8px;height:7.80px"></div>
<div class="bar" style="left:1230.50px;top:527.9px;width:13.8px;height:5.80px"></div>
<div class="bar" style="left:1250.16px;top:526.7px;width:13.8px;height:7.00px"></div>
<svg class="a" style="left:0;top:0" width="1280" height="546"><path d="M42.4 144.3H283.8V326.3H42.4Z M42.4 232.2H283.8 M42.4 292.3H283.8 M288.9 144.3H530.5V326.3H288.9Z M288.9 232.2H530.5 M288.9 292.3H530.5 M535.5 144.3H777.1V326.3H535.5Z M535.5 232.2H777.1 M535.5 292.3H777.1 M782.3 144.3H1023.3V326.3H782.3Z M782.3 232.2H1023.3 M782.3 292.3H1023.3 M1028.3 144.3H1270.6V326.3H1028.3Z M1028.3 232.2H1270.6 M1028.3 292.3H1270.6 M42.4 355.4H283.8V536.1H42.4Z M42.4 441.4H283.8 M42.4 501.3H283.8 M288.9 355.4H530.5V536.1H288.9Z M288.9 441.4H530.5 M288.9 501.3H530.5 M535.5 355.4H777.1V536.1H535.5Z M535.5 441.4H777.1 M535.5 501.3H777.1 M782.3 355.4H1023.3V536.1H782.3Z M782.3 441.4H1023.3 M782.3 501.3H1023.3 M1028.3 355.4H1270.6V536.1H1028.3Z M1028.3 441.4H1270.6 M1028.3 501.3H1270.6" fill="none" stroke="#4a4a4a" stroke-width="1.3"/></svg>
<div class="a" style="left:1275px;top:458px;width:12px;height:17.5px;border:2px solid #3f6fd1;background:#fff"></div>
</body></html>
